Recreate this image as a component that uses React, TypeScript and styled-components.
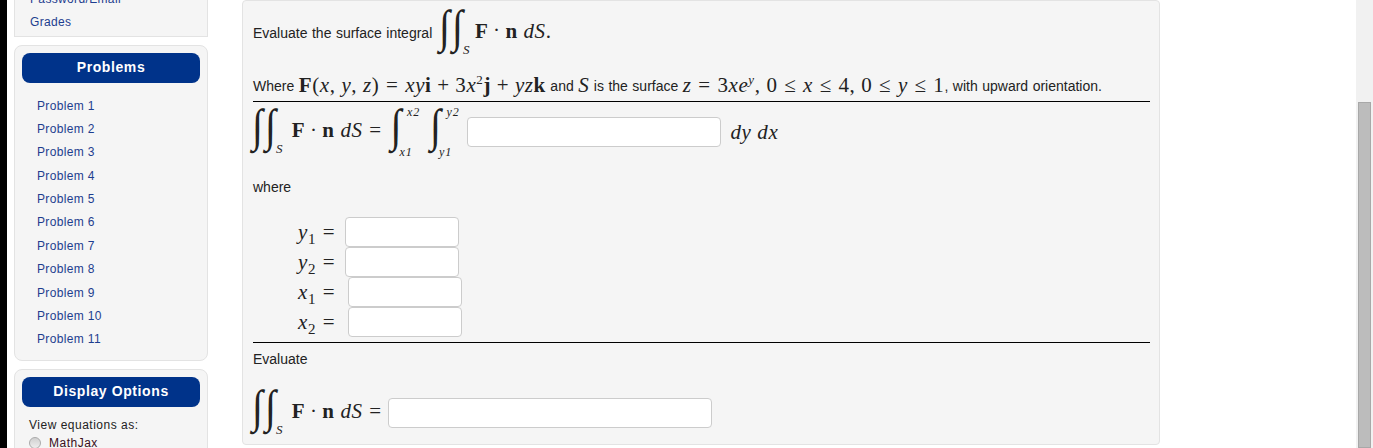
import React from "react";
import styled, { createGlobalStyle } from "styled-components";

const problems = Array.from({ length: 11 }, (_, i) => `Problem ${i + 1}`);
const bounds = [
  { name: "y", index: "1", gap: 3 },
  { name: "y", index: "2", gap: 3 },
  { name: "x", index: "1", gap: 6 },
  { name: "x", index: "2", gap: 6 },
];

const GlobalStyle = createGlobalStyle`
  html, body {
    margin: 0;
    height: 448px;
    overflow: hidden;
    background: #fff;
    color: #222;
    font-family: "Liberation Sans", Arial, sans-serif;
    font-size: 14px;
  }
`;

const Page = styled.div`
  display: flex;
  height: 448px;
  overflow: hidden;
`;

const EdgeStrip = styled.div`
  width: 7px;
  flex: none;
  background: #000;
`;

const Sidebar = styled.div`
  width: 194px;
  flex: none;
  margin-left: 7px;
  display: flex;
  flex-direction: column;
  gap: 8px;
`;

const Card = styled.div`
  box-sizing: border-box;
  flex: none;
  background: #f5f5f5;
  border: 1px solid #e3e3e3;
  border-radius: 8px;
  padding: 7px;
`;

const AccountCard = styled(Card)`
  height: 49px;
  margin-top: -12px;
  padding: 0 15px;
  border-radius: 0;
  border-top: none;
`;

const ProblemsCard = styled(Card)`
  height: 316px;
`;

const OptionsCard = styled(Card)`
  height: 100px;
`;

const NavLink = styled.a`
  display: block;
  height: 23.4px;
  line-height: 23.4px;
  font-size: 12px;
  letter-spacing: 0.35px;
  color: #1d3d8f;
`;

const CardTitle = styled.div`
  height: 30px;
  line-height: 29px;
  background: #00338a;
  border-radius: 8px;
  color: #fff;
  font-size: 14px;
  font-weight: bold;
  letter-spacing: 0.6px;
  text-align: center;
`;

const ProblemList = styled.div`
  margin-top: 11.5px;
  padding-left: 15px;
`;

const OptionLabel = styled.div`
  margin-top: 10px;
  padding-left: 7px;
  font-size: 12px;
  letter-spacing: 0.5px;
  line-height: 16px;
  color: #222;
`;

const RadioRow = styled.div`
  display: flex;
  align-items: center;
  gap: 8px;
  margin-top: 2px;
  padding-left: 7px;
  font-size: 12px;
  letter-spacing: 0.5px;
  line-height: 16px;
  color: #3a1020;
`;

const RadioDot = styled.span`
  width: 12px;
  height: 12px;
  border-radius: 50%;
  border: 1px solid #aaa;
  box-sizing: border-box;
  background: linear-gradient(#d0d0d0, #eee);
`;

const Panel = styled.main`
  box-sizing: border-box;
  width: 918px;
  height: 445px;
  flex: none;
  margin-left: 34px;
  padding: 0 9px 0 10px;
  background: #f5f5f5;
  border: 1px solid #e3e3e3;
  border-radius: 4px;
`;

const MathRow = styled.div<{ $height: number }>`
  display: flex;
  align-items: center;
  height: ${(p) => p.$height}px;
  white-space: pre;
`;

const RuledRow = styled(MathRow)`
  margin-top: 6px;
  border-bottom: 1px solid #000;
`;

const Prose = styled.span`
  font-size: 14px;
  word-spacing: 0.6px;
`;

const LeadProse = styled(Prose)`
  margin-right: 2px;
`;

const Math = styled.span`
  font-family: "Liberation Serif", "DejaVu Serif", serif;
  font-size: 21px;
  letter-spacing: 0.6px;
  color: #222;
  white-space: pre;
`;

const Differential = styled(Math)`
  margin-left: 9px;
`;

const V = styled.i`
  font-style: italic;
`;

const B = styled.b`
  font-weight: bold;
`;

const Rel = styled.span`
  margin: 0 6.7px;
`;

const Bin = styled.span`
  margin: 0 5.7px;
`;

const Dot = styled.span`
  margin: 0 4.7px;
`;

const Sup = styled.sup`
  font-size: 13px;
  line-height: 0;
`;

const Index = styled.sub`
  font-size: 15px;
  line-height: 0;
`;

const IntegralWrap = styled.span<{ $width: number }>`
  position: relative;
  display: inline-block;
  width: ${(p) => p.$width}px;
  height: 48px;
  flex: none;
  vertical-align: middle;
`;

const IntegralSign = styled.span<{ $left: number }>`
  position: absolute;
  top: -6px;
  left: ${(p) => p.$left}px;
  font-family: "Liberation Serif", serif;
  font-size: 40px;
  line-height: 48px;
  letter-spacing: 0;
  font-weight: normal;
  transform: scaleY(1.15);
`;

const Limit = styled.i<{ $left: number }>`
  position: absolute;
  left: ${(p) => p.$left}px;
  font-size: 12px;
  line-height: 14px;
  letter-spacing: 1px;
`;

const UpperLimit = styled(Limit)`
  top: -3px;
`;

const LowerLimit = styled(Limit)`
  bottom: -3px;
`;

const SurfaceLabel = styled(Limit)`
  bottom: 0;
  font-size: 13px;
`;

const AnswerInput = styled.input<{ $width: number }>`
  box-sizing: border-box;
  width: ${(p) => p.$width}px;
  height: 30px;
  flex: none;
  padding: 0;
  background: #fff;
  border: 1px solid #ccc;
  border-radius: 4px;
`;

const WhereBlock = styled.div`
  box-sizing: border-box;
  height: 55px;
  padding-top: 15px;
  line-height: 20px;
`;

const EvaluateBlock = styled(WhereBlock)`
  padding-top: 6px;
`;

const BoundsList = styled.div`
  padding-left: 45px;
  padding-bottom: 5px;
  border-bottom: 1px solid #000;
`;

const BoundRow = styled.div`
  display: flex;
  align-items: center;
  height: 30px;
`;

const BoundName = styled(Math)<{ $gap: number }>`
  margin-right: ${(p) => p.$gap}px;
`;

const Scrollbar = styled.div`
  position: fixed;
  top: 0;
  right: 0;
  bottom: 0;
  width: 17px;
  background: #f1f1f1;
`;

const ScrollThumb = styled.div`
  box-sizing: border-box;
  margin: 102px 2px 0;
  height: 346px;
  background: #bcbcbc;
  border: 1px solid #a8a8a8;
`;

function DoubleIntegral({ width = 33 }: { width?: number }) {
  return (
    <IntegralWrap $width={width}>
      <IntegralSign $left={-1}>∫</IntegralSign>
      <IntegralSign $left={12}>∫</IntegralSign>
      <SurfaceLabel $left={23}>S</SurfaceLabel>
    </IntegralWrap>
  );
}

function BoundedIntegral({ upper, lower }: { upper: string; lower: string }) {
  return (
    <IntegralWrap $width={39.5}>
      <IntegralSign $left={2}>∫</IntegralSign>
      <UpperLimit $left={18.5}>{upper}</UpperLimit>
      <LowerLimit $left={11}>{lower}</LowerLimit>
    </IntegralWrap>
  );
}

function FluxTerm() {
  return (
    <>
      <B>F</B>
      <Dot>·</Dot>
      <B>n</B> <V>dS</V>
    </>
  );
}

export default function App() {
  return (
    <Page>
      <GlobalStyle />
      <EdgeStrip />
      <Sidebar>
        <AccountCard>
          <NavLink>Password/Email</NavLink>
          <NavLink>Grades</NavLink>
        </AccountCard>
        <ProblemsCard>
          <CardTitle>Problems</CardTitle>
          <ProblemList>
            {problems.map((name) => (
              <NavLink key={name}>{name}</NavLink>
            ))}
          </ProblemList>
        </ProblemsCard>
        <OptionsCard>
          <CardTitle>Display Options</CardTitle>
          <OptionLabel>View equations as:</OptionLabel>
          <RadioRow>
            <RadioDot />
            MathJax
          </RadioRow>
        </OptionsCard>
      </Sidebar>
      <Panel>
        <MathRow $height={63}>
          <LeadProse>Evaluate the surface integral</LeadProse>
          <Math>
            {" "}
            <DoubleIntegral width={29} /> <FluxTerm />.
          </Math>
        </MathRow>
        <RuledRow $height={31}>
          <Prose>Where </Prose>
          <Math>
            <B>F</B>(<V>x</V>, <V>y</V>, <V>z</V>)<Rel>=</Rel>
            <V>xy</V>
            <B>i</B>
            <Bin>+</Bin>3<V>x</V>
            <Sup>2</Sup>
            <B>j</B>
            <Bin>+</Bin>
            <V>yz</V>
            <B>k</B>
          </Math>
          <Prose> and </Prose>
          <Math>
            <V>S</V>
          </Math>
          <Prose> is the surface </Prose>
          <Math>
            <V>z</V>
            <Rel>=</Rel>3<V>xe</V>
            <Sup>
              <V>y</V>
            </Sup>
            , 0<Rel>≤</Rel>
            <V>x</V>
            <Rel>≤</Rel>4, 0<Rel>≤</Rel>
            <V>y</V>
            <Rel>≤</Rel>1
          </Math>
          <Prose>, with upward orientation.</Prose>
        </RuledRow>
        <MathRow $height={60}>
          <Math>
            <DoubleIntegral /> <FluxTerm />
            <Rel>=</Rel>
            <BoundedIntegral upper="x2" lower="x1" />
            <BoundedIntegral upper="y2" lower="y1" />
          </Math>
          <AnswerInput $width={254} />
          <Differential>
            <V>dy</V> <V>dx</V>
          </Differential>
        </MathRow>
        <WhereBlock>where</WhereBlock>
        <BoundsList>
          {bounds.map((b) => (
            <BoundRow key={b.name + b.index}>
              <BoundName $gap={b.gap}>
                <V>{b.name}</V>
                <Index>{b.index}</Index>
                <Rel>=</Rel>
              </BoundName>
              <AnswerInput $width={114} />
            </BoundRow>
          ))}
        </BoundsList>
        <EvaluateBlock>Evaluate</EvaluateBlock>
        <MathRow $height={30}>
          <Math>
            <DoubleIntegral /> <FluxTerm />
            <Rel>=</Rel>
          </Math>
          <AnswerInput $width={324} />
        </MathRow>
      </Panel>
      <Scrollbar>
        <ScrollThumb />
      </Scrollbar>
    </Page>
  );
}
